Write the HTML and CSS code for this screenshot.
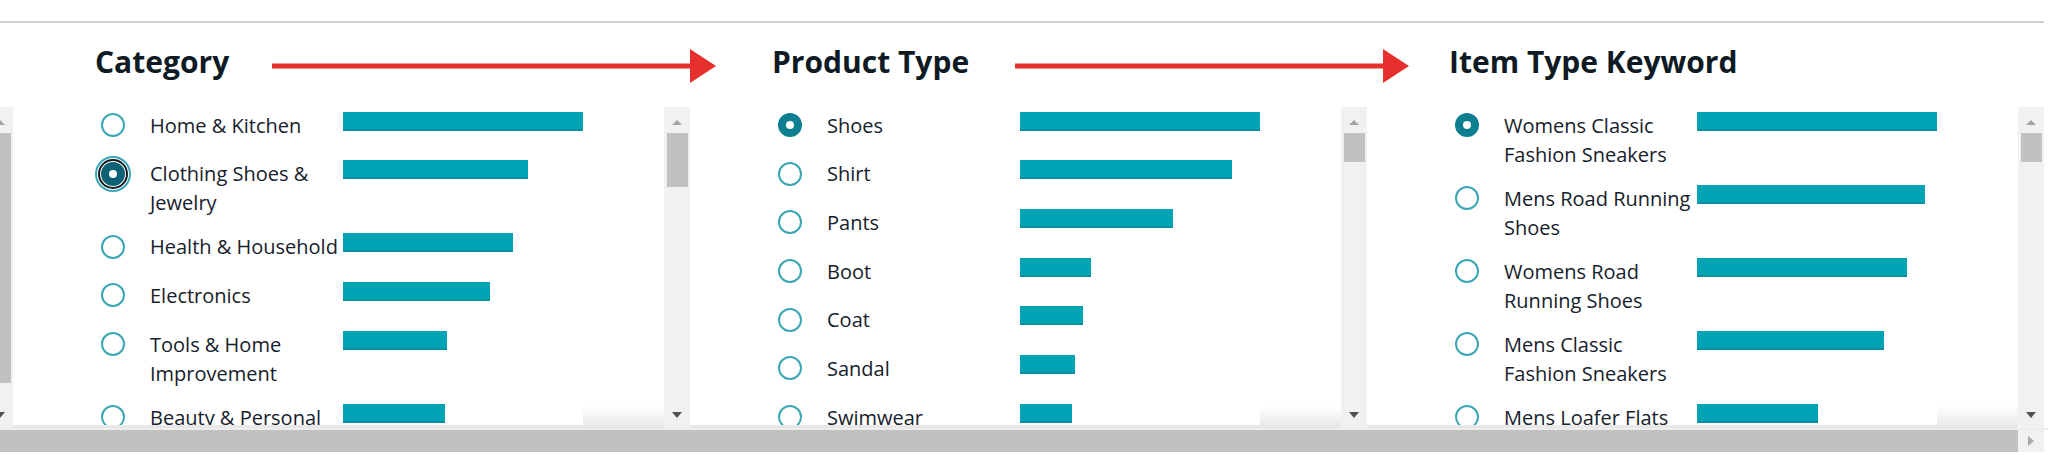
FILE: index.html
```html
<!DOCTYPE html>
<html lang="en">
<head>
<meta charset="utf-8">
<title>Category / Product Type / Item Type Keyword</title>
<link rel="stylesheet" href="styles.css">
</head>
<body>
<div class="page">
  <div class="topline"></div>

  <div class="header">
    <div class="stub-space"></div>
    <div class="hcell">
      <h2 class="title">Category</h2>
      <svg class="arrow arrow-1" width="444" height="34" viewBox="0 0 444 34" aria-hidden="true">
        <rect x="0" y="14.5" width="420" height="5" fill="#e5302e"/>
        <polygon points="418,0 444,17 418,34" fill="#e5302e"/>
      </svg>
    </div>
    <div class="hcell">
      <h2 class="title">Product Type</h2>
      <svg class="arrow arrow-2" width="394" height="34" viewBox="0 0 394 34" aria-hidden="true">
        <rect x="0" y="14.5" width="370" height="5" fill="#e5302e"/>
        <polygon points="368,0 394,17 368,34" fill="#e5302e"/>
      </svg>
    </div>
    <div class="hcell">
      <h2 class="title">Item Type Keyword</h2>
    </div>
  </div>

  <div class="panels">
    <div class="stub">
      <div class="vscroll">
        <span class="up"></span>
        <span class="thumb thumb-big"></span>
        <span class="down"></span>
      </div>
    </div>

    <div class="panel">
      <div class="list">
        <div class="row"><span class="radio"></span><span class="label">Home &amp; Kitchen</span><span class="barcell"><span class="bar" style="width:240px"></span></span></div>
        <div class="row"><span class="radio radio-focus"></span><span class="label">Clothing Shoes &amp; Jewelry</span><span class="barcell"><span class="bar" style="width:185px"></span></span></div>
        <div class="row"><span class="radio"></span><span class="label">Health &amp; Household</span><span class="barcell"><span class="bar" style="width:170px"></span></span></div>
        <div class="row"><span class="radio"></span><span class="label">Electronics</span><span class="barcell"><span class="bar" style="width:147px"></span></span></div>
        <div class="row"><span class="radio"></span><span class="label">Tools &amp; Home Improvement</span><span class="barcell"><span class="bar" style="width:104px"></span></span></div>
        <div class="row"><span class="radio"></span><span class="label">Beauty &amp; Personal Care</span><span class="barcell"><span class="bar" style="width:102px"></span></span></div>
      </div>
    </div>
    <div class="vscroll">
      <span class="up"></span>
      <span class="thumb thumb-mid"></span>
      <span class="down"></span>
    </div>

    <div class="panel">
      <div class="list">
        <div class="row"><span class="radio radio-on"></span><span class="label">Shoes</span><span class="barcell"><span class="bar" style="width:240px"></span></span></div>
        <div class="row"><span class="radio"></span><span class="label">Shirt</span><span class="barcell"><span class="bar" style="width:212px"></span></span></div>
        <div class="row"><span class="radio"></span><span class="label">Pants</span><span class="barcell"><span class="bar" style="width:153px"></span></span></div>
        <div class="row"><span class="radio"></span><span class="label">Boot</span><span class="barcell"><span class="bar" style="width:71px"></span></span></div>
        <div class="row"><span class="radio"></span><span class="label">Coat</span><span class="barcell"><span class="bar" style="width:63px"></span></span></div>
        <div class="row"><span class="radio"></span><span class="label">Sandal</span><span class="barcell"><span class="bar" style="width:55px"></span></span></div>
        <div class="row"><span class="radio"></span><span class="label">Swimwear</span><span class="barcell"><span class="bar" style="width:52px"></span></span></div>
      </div>
    </div>
    <div class="vscroll">
      <span class="up"></span>
      <span class="thumb thumb-small"></span>
      <span class="down"></span>
    </div>

    <div class="panel">
      <div class="list">
        <div class="row"><span class="radio radio-on"></span><span class="label">Womens Classic Fashion Sneakers</span><span class="barcell"><span class="bar" style="width:241px"></span></span></div>
        <div class="row"><span class="radio"></span><span class="label">Mens Road Running Shoes</span><span class="barcell"><span class="bar" style="width:228px"></span></span></div>
        <div class="row"><span class="radio"></span><span class="label">Womens Road Running Shoes</span><span class="barcell"><span class="bar" style="width:210px"></span></span></div>
        <div class="row"><span class="radio"></span><span class="label">Mens Classic Fashion Sneakers</span><span class="barcell"><span class="bar" style="width:187px"></span></span></div>
        <div class="row"><span class="radio"></span><span class="label">Mens Loafer Flats</span><span class="barcell"><span class="bar" style="width:121px"></span></span></div>
      </div>
    </div>
    <div class="vscroll">
      <span class="up"></span>
      <span class="thumb thumb-small"></span>
      <span class="down"></span>
    </div>
    <div class="tail"></div>
  </div>

  <div class="gapline"></div>
  <div class="hscroll">
    <div class="htrack"></div>
    <div class="hbtn"><span class="right"></span></div>
    <div class="htail"></div>
  </div>
</div>
</body>
</html>
```

FILE: styles.css
```css
* { box-sizing: border-box; }

html, body {
  margin: 0;
  padding: 0;
  background: #ffffff;
}

body {
  width: 2048px;
  height: 455px;
  overflow: hidden;
  font-family: "Open Sans", "Liberation Sans", sans-serif;
  color: #16212b;
}

.page {
  width: 2048px;
  padding-top: 21px;
}

.topline {
  height: 2px;
  background: #cfcfcf;
  margin-right: 4px;
}

/* Header row with titles and arrows */
.header {
  display: flex;
  height: 84px;
  padding-top: 19px;
}

.stub-space {
  flex: none;
  width: 13px;
}

.hcell {
  flex: none;
  width: 677px;
  display: flex;
  align-items: flex-start;
  padding-left: 82px;
}

.title {
  margin: 0;
  font-size: 30px;
  line-height: 40px;
  font-weight: 700;
  color: #0e1a24;
  white-space: nowrap;
}

.arrow {
  flex: none;
  display: block;
  margin-top: 7px;
  overflow: visible;
}

.arrow-1 { margin-left: 43px; }
.arrow-2 { margin-left: 46px; }

/* Panels row */
.panels {
  display: flex;
  height: 321px;
}

.stub {
  flex: none;
  width: 13px;
  overflow: hidden;
  display: flex;
  justify-content: flex-end;
}

.panel {
  flex: none;
  width: 651px;
  height: 321px;
  overflow: hidden;
  background: linear-gradient(180deg, #ffffff 0, #ffffff calc(100% - 22px), #e6e6e6 100%);
}

.list {
  width: 570px;
  height: 318px;
  overflow: hidden;
  background: #ffffff;
  padding-top: 3.5px;
  padding-left: 88px;
}

.row {
  display: flex;
  align-items: flex-start;
  padding-bottom: 15px;
}

.radio {
  flex: none;
  width: 24px;
  height: 24px;
  margin-top: 2.5px;
  margin-right: 25px;
  border-radius: 50%;
  border: 2px solid #3aa6b6;
  background: #ffffff;
}

.radio-on {
  border: 8px solid #0e7f90;
}

.radio-focus {
  border: 8px solid #0c6274;
  box-shadow: 0 0 0 1px #ffffff, 0 0 0 3px #121a1f, 0 0 0 4px #ffffff, 0 0 0 6px #3aa6b6;
}

.label {
  flex: none;
  width: 193px;
  font-size: 20px;
  line-height: 29px;
  font-weight: 500;
  color: #16212b;
}

.barcell {
  flex: none;
  width: 240px;
  min-height: 33.7px;
}

.bar {
  display: block;
  height: 19px;
  margin-top: 1px;
  background: #00a3b4;
  box-shadow: inset 0 -2px 0 #07909f;
}

/* Vertical scrollbar */
.vscroll {
  flex: none;
  width: 26px;
  height: 321px;
  background: #f1f1f1;
  display: flex;
  flex-direction: column;
  align-items: center;
}

.up {
  margin-top: 13px;
  width: 0;
  height: 0;
  border-left: 5px solid transparent;
  border-right: 5px solid transparent;
  border-bottom: 5px solid #a3a3a3;
}

.thumb {
  width: 21px;
  margin-top: 8px;
  background: #c1c1c1;
}

.thumb-big { height: 250px; }
.thumb-mid { height: 54px; }
.thumb-small { height: 29px; }

.down {
  margin-top: auto;
  margin-bottom: 10px;
  width: 0;
  height: 0;
  border-left: 5px solid transparent;
  border-right: 5px solid transparent;
  border-top: 6px solid #505050;
}

.tail {
  flex: 1;
  background: #ffffff;
}

.gapline {
  height: 2px;
  background: #ededed;
}

/* Horizontal scrollbar */
.hscroll {
  display: flex;
  height: 22px;
}

.htrack {
  flex: none;
  width: 2018px;
  background: #c1c1c1;
}

.hbtn {
  flex: none;
  width: 26px;
  background: #f1f1f1;
  display: flex;
  align-items: center;
  justify-content: center;
}

.right {
  width: 0;
  height: 0;
  border-top: 5px solid transparent;
  border-bottom: 5px solid transparent;
  border-left: 6px solid #a8a8a8;
}

.htail {
  flex: 1;
  background: #ffffff;
}
```
